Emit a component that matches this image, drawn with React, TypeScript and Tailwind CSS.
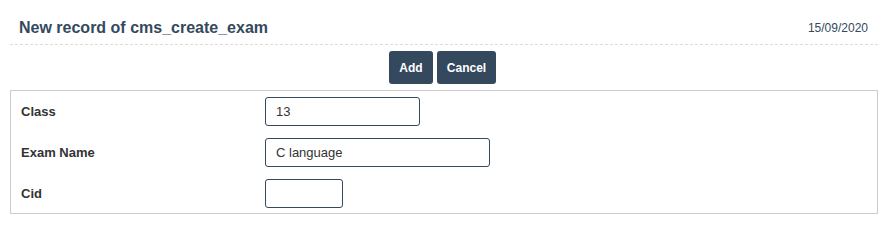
const fields = [
  { label: "Class", value: "13", width: "w-[155px]" },
  { label: "Exam Name", value: "C language", width: "w-[225px]" },
  { label: "Cid", value: "", width: "w-[78px]" },
];

export default function App() {
  return (
    <div className="w-[888px] h-[240px] bg-white font-['Liberation_Sans',Arial,sans-serif] text-[#333]">
      <div className="mx-[10px] pt-[19px] pb-[7px] pl-[9px] pr-[10px] flex items-center justify-between border-b border-dashed border-[#ddd]">
        <h1 className="text-[16px] leading-[18px] font-bold text-[#34495e]">
          New record of cms_create_exam
        </h1>
        <span className="text-[12px] leading-[14px] text-[#34495e]">15/09/2020</span>
      </div>

      <div className="flex justify-center gap-[4px] mt-[6px] pr-[3px]">
        <button className="w-[44px] h-[33px] rounded-[3px] bg-[#34495e] text-white text-[12px] font-bold">
          Add
        </button>
        <button className="w-[59px] h-[33px] rounded-[3px] bg-[#34495e] text-white text-[12px] font-bold">
          Cancel
        </button>
      </div>

      <div className="mx-[10px] mt-[6px] border border-[#ccc] pt-[6px] pb-[5px] flex flex-col gap-[12px]">
        {fields.map((f) => (
          <div key={f.label} className="flex items-center">
            <label className="w-[254px] pl-[10px] text-[13px] font-bold text-[#333]">
              {f.label}
            </label>
            <input
              defaultValue={f.value}
              className={`${f.width} h-[29px] px-[10px] border border-[#34495e] rounded-[3px] text-[13px] text-[#333] outline-none`}
            />
          </div>
        ))}
      </div>
    </div>
  );
}
